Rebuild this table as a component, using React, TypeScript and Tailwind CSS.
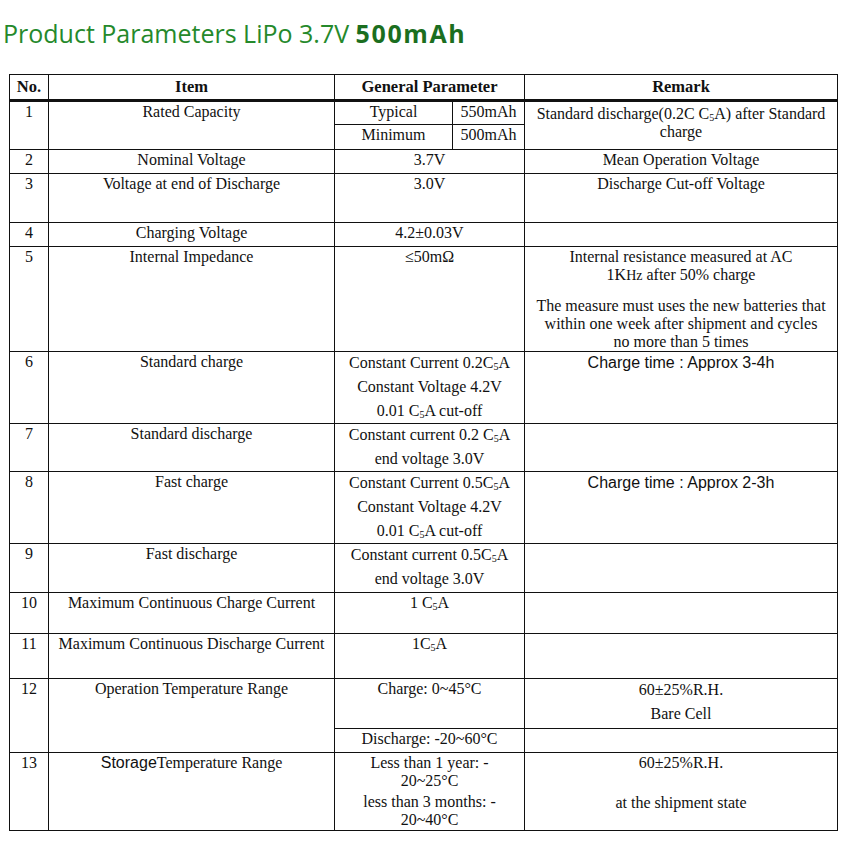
import React from 'react';

const C5 = ({ pre = 'C' }: { pre?: string }) => (
  <span>
    {pre}
    <span className="text-[10px] leading-none align-[-2px]">5</span>A
  </span>
);

const cell = 'border border-[#111] align-top text-center px-[3px] pt-[1px] leading-[18px]';
const head = 'border border-[#111] border-b-[3px] border-b-double align-middle text-center font-bold text-[16.5px] leading-[20px]';
const multi = 'border border-[#111] align-top text-center px-[3px] pt-0 leading-[24px]';
const sans = "font-['Liberation_Sans',sans-serif]";

const App = () => {
  return (
    <div className="w-[844px] h-[844px] bg-white overflow-hidden">
      <h1 className="pl-[3px] pt-[17px] text-[25px] leading-[32px] font-['Open_Sans',sans-serif] text-[#25892b] whitespace-nowrap">
        Product Parameters LiPo 3.7V{' '}
        <span className="font-bold tracking-[1.6px] text-[#1b6e1f]">500mAh</span>
      </h1>

      <table className="ml-[9px] mt-[25px] w-[828px] table-fixed border-collapse font-['Liberation_Serif',serif] text-[16px] text-[#111]">
        <colgroup>
          <col className="w-[39px]" />
          <col className="w-[286px]" />
          <col className="w-[118px]" />
          <col className="w-[72px]" />
          <col className="w-[313px]" />
        </colgroup>
        <thead>
          <tr className="h-[26px]">
            <th className={head}>No.</th>
            <th className={head}>Item</th>
            <th colSpan={2} className={head}>
              General Parameter
            </th>
            <th className={head}>Remark</th>
          </tr>
        </thead>
        <tbody>
          <tr className="h-[24px]">
            <td rowSpan={2} className={cell}>1</td>
            <td rowSpan={2} className={cell}>Rated Capacity</td>
            <td className={cell}>Typical</td>
            <td className={cell}>550mAh</td>
            <td rowSpan={2} className={`${cell} pt-[3px]`}>
              <p>
                Standard discharge(0.2C <C5 />) after Standard
              </p>
              <p>charge</p>
            </td>
          </tr>
          <tr className="h-[25px]">
            <td className={cell}>Minimum</td>
            <td className={cell}>500mAh</td>
          </tr>

          <tr className="h-[24px]">
            <td className={cell}>2</td>
            <td className={cell}>Nominal Voltage</td>
            <td colSpan={2} className={cell}>3.7V</td>
            <td className={cell}>Mean Operation Voltage</td>
          </tr>

          <tr className="h-[49px]">
            <td className={cell}>3</td>
            <td className={cell}>Voltage at end of Discharge</td>
            <td colSpan={2} className={cell}>3.0V</td>
            <td className={cell}>Discharge Cut-off Voltage</td>
          </tr>

          <tr className="h-[24px]">
            <td className={cell}>4</td>
            <td className={cell}>Charging Voltage</td>
            <td colSpan={2} className={cell}>4.2±0.03V</td>
            <td className={cell}></td>
          </tr>

          <tr className="h-[105px]">
            <td className={cell}>5</td>
            <td className={cell}>Internal Impedance</td>
            <td colSpan={2} className={cell}>≤50mΩ</td>
            <td className={cell}>
              <p>Internal resistance measured at AC</p>
              <p>
                1K<span className="text-[14px]">Hz</span> after 50% charge
              </p>
              <div className="mt-[12px]">
                <p>The measure must uses the new batteries that</p>
                <p>within one week after shipment and cycles</p>
                <p>no more than 5 times</p>
              </div>
            </td>
          </tr>

          <tr className="h-[72px]">
            <td className={cell}>6</td>
            <td className={cell}>Standard charge</td>
            <td colSpan={2} className={multi}>
              <p className="-mt-[1px]">
                Constant Current 0.2<C5 />
              </p>
              <p>Constant Voltage 4.2V</p>
              <p>
                0.01 <C5 /> cut-off
              </p>
            </td>
            <td className={`${cell} ${sans} leading-[20px]`}>Charge time : Approx 3-4h</td>
          </tr>

          <tr className="h-[48px]">
            <td className={cell}>7</td>
            <td className={cell}>Standard discharge</td>
            <td colSpan={2} className={multi}>
              <p className="-mt-[1px]">
                Constant current 0.2 <C5 />
              </p>
              <p>end voltage 3.0V</p>
            </td>
            <td className={cell}></td>
          </tr>

          <tr className="h-[72px]">
            <td className={cell}>8</td>
            <td className={cell}>Fast charge</td>
            <td colSpan={2} className={multi}>
              <p className="-mt-[1px]">
                Constant Current 0.5<C5 />
              </p>
              <p>Constant Voltage 4.2V</p>
              <p>
                0.01 <C5 /> cut-off
              </p>
            </td>
            <td className={`${cell} ${sans} leading-[20px]`}>Charge time : Approx 2-3h</td>
          </tr>

          <tr className="h-[49px]">
            <td className={cell}>9</td>
            <td className={cell}>Fast discharge</td>
            <td colSpan={2} className={multi}>
              <p className="-mt-[1px]">
                Constant current 0.5<C5 />
              </p>
              <p>end voltage 3.0V</p>
            </td>
            <td className={cell}></td>
          </tr>

          <tr className="h-[41px]">
            <td className={cell}>10</td>
            <td className={cell}>Maximum Continuous Charge Current</td>
            <td colSpan={2} className={cell}>
              1 <C5 />
            </td>
            <td className={cell}></td>
          </tr>

          <tr className="h-[45px]">
            <td className={cell}>11</td>
            <td className={cell}>Maximum Continuous Discharge Current</td>
            <td colSpan={2} className={cell}>
              1<C5 />
            </td>
            <td className={cell}></td>
          </tr>

          <tr className="h-[50px]">
            <td rowSpan={2} className={cell}>12</td>
            <td rowSpan={2} className={cell}>Operation Temperature Range</td>
            <td colSpan={2} className={cell}>Charge: 0~45°C</td>
            <td className={multi}>
              <p className="-mt-[1px]">60±25%R.H.</p>
              <p>Bare Cell</p>
            </td>
          </tr>
          <tr className="h-[24px]">
            <td colSpan={2} className={cell}>Discharge: -20~60°C</td>
            <td className={cell}></td>
          </tr>

          <tr className="h-[78px]">
            <td className={cell}>13</td>
            <td className={cell}>
              <span className={sans}>Storage</span>Temperature Range
            </td>
            <td colSpan={2} className={cell}>
              <p>Less than 1 year: -</p>
              <p>20~25°C</p>
              <p className="mt-[3px]">less than 3 months: -</p>
              <p>20~40°C</p>
            </td>
            <td className={cell}>
              <p>60±25%R.H.</p>
              <p className="mt-[22px]">at the shipment state</p>
            </td>
          </tr>
        </tbody>
      </table>
    </div>
  );
};

export default App;
